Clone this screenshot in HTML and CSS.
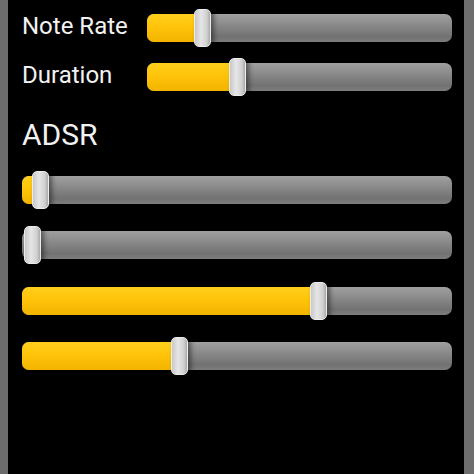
FILE: index.html
```html
<!DOCTYPE html>
<html lang="en">
<head>
  <meta charset="UTF-8" />
  <title>Synth Settings</title>
  <link rel="stylesheet" href="styles.css">
</head>
<body>

<div class="panel">
  <div class="row">
    <div class="label">Note Rate</div>
    <div class="track">
      <div class="fill" style="width: 56px"></div>
      <div class="thumb" style="left: 47px"></div>
    </div>
  </div>

  <div class="row">
    <div class="label">Duration</div>
    <div class="track">
      <div class="fill" style="width: 90px"></div>
      <div class="thumb" style="left: 82px"></div>
    </div>
  </div>

  <!-- Envelope -->
  <div class="section-title">ADSR</div>

  <div class="envelope">
    <div class="row">
      <div class="track">
        <div class="fill" style="width: 18px"></div>
        <div class="thumb" style="left: 10px"></div>
      </div>
    </div>
    <div class="row">
      <div class="track">
        <div class="fill" style="width: 0px"></div>
        <div class="thumb" style="left: 2px"></div>
      </div>
    </div>
    <div class="row">
      <div class="track">
        <div class="fill" style="width: 296px"></div>
        <div class="thumb" style="left: 288px"></div>
      </div>
    </div>
    <div class="row">
      <div class="track">
        <div class="fill" style="width: 157px"></div>
        <div class="thumb" style="left: 149px"></div>
      </div>
    </div>
  </div>
</div>

</body>
</html>
```

FILE: styles.css
```css
body {
  margin: 0;
  padding: 0;
  background: #000;
  font-family: Roboto, "Liberation Sans", sans-serif;
  color: #f2f2f2;
}

.panel {
  box-sizing: border-box;
  height: 100vh;
  border-left: 8px solid #6c6c6c;
  border-right: 10px solid #6e6e6e;
  padding: 9px 12px 0 14px;
  display: flex;
  flex-direction: column;
  gap: 11px;
}

.row {
  display: flex;
  align-items: center;
  height: 38px;
}

.label {
  width: 125px;
  font-size: 24px;
  padding-bottom: 4px;
}

.section-title {
  font-size: 30px;
  line-height: 36px;
  margin: 10px 0 7px;
}

.envelope {
  display: flex;
  flex-direction: column;
  gap: 17.3px;
}

/* Slider */
.track {
  position: relative;
  flex: 1;
  height: 28px;
  border-radius: 7px;
  background: linear-gradient(#a0a0a0, #8c8c8c 35%, #727272 80%, #7c7c7c);
}

.fill {
  height: 100%;
  border-radius: 7px 0 0 7px;
  background: linear-gradient(#ffcf1c, #ffc40a 45%, #f2b400);
}

.thumb {
  position: absolute;
  top: -5px;
  box-sizing: border-box;
  width: 17px;
  height: 38px;
  border: 1px solid #ececec;
  border-radius: 5px;
  background: linear-gradient(90deg, #c8c8c8, #e6e6e6 40%, #cfcfcf 80%, #a8a8a8);
  box-shadow: 3px 0 5px rgba(0, 0, 0, 0.45);
}
```
